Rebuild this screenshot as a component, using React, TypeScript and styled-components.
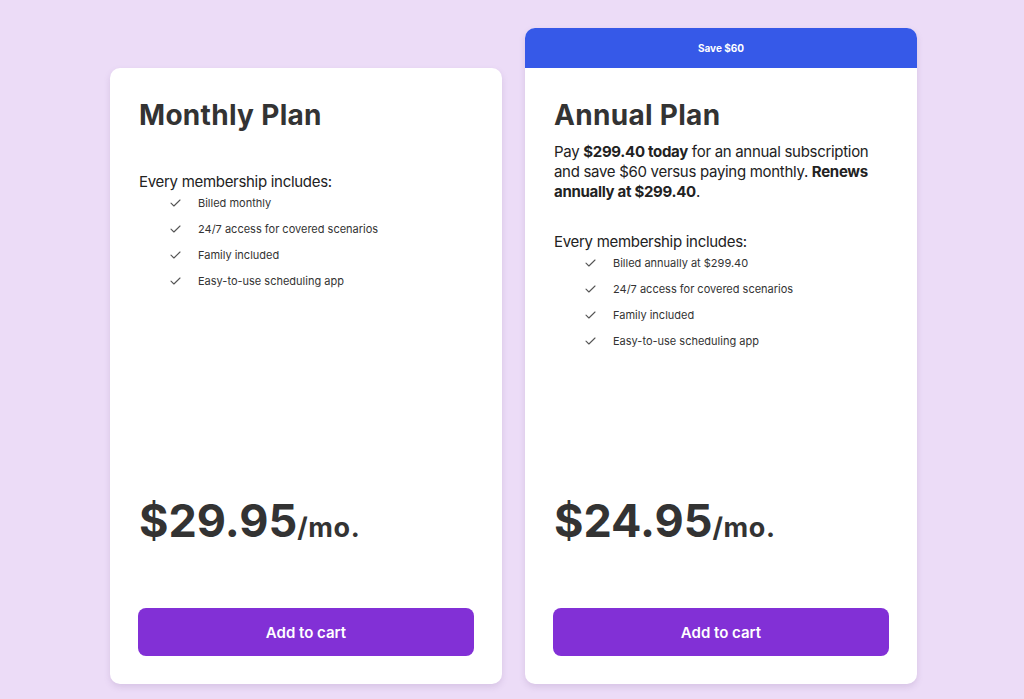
import styled, { createGlobalStyle } from "styled-components";

interface Plan {
  name: string;
  badge?: string;
  description?: React.ReactNode;
  features: string[];
  price: string;
}

const plans: Plan[] = [
  {
    name: "Monthly Plan",
    features: [
      "Billed monthly",
      "24/7 access for covered scenarios",
      "Family included",
      "Easy-to-use scheduling app",
    ],
    price: "$29.95",
  },
  {
    name: "Annual Plan",
    badge: "Save $60",
    description: (
      <>
        Pay <b>$299.40 today</b> for an annual subscription and save $60 versus
        paying monthly. <b>Renews annually at $299.40</b>.
      </>
    ),
    features: [
      "Billed annually at $299.40",
      "24/7 access for covered scenarios",
      "Family included",
      "Easy-to-use scheduling app",
    ],
    price: "$24.95",
  },
];

const Check = () => (
  <svg width="11" height="8" viewBox="0 0 11 8" fill="none">
    <path
      d="M1 4.2L3.9 7L10 1"
      stroke="#555"
      strokeWidth="1.1"
      strokeLinecap="round"
      strokeLinejoin="round"
    />
  </svg>
);

const PlanCard = ({ plan }: { plan: Plan }) => {
  return (
    <Card>
      {plan.badge && <Banner>{plan.badge}</Banner>}
      <Body>
        <Title>{plan.name}</Title>
        <Description>{plan.description}</Description>
        <Includes>Every membership includes:</Includes>
        <FeatureList>
          {plan.features.map((f) => (
            <Feature key={f}>
              <Check />
              <span>{f}</span>
            </Feature>
          ))}
        </FeatureList>
        <Spacer />
        <Price>
          {plan.price}
          <small>/mo.</small>
        </Price>
        <CartButton>Add to cart</CartButton>
      </Body>
    </Card>
  );
};

const App = () => {
  return (
    <>
      <GlobalStyle />
      <Page>
        {plans.map((p) => (
          <PlanCard key={p.name} plan={p} />
        ))}
      </Page>
    </>
  );
};

export default App;

const GlobalStyle = createGlobalStyle`
  html, body {
    margin: 0;
    padding: 0;
    background: #ecdcf7;
    font-family: "Inter", "Noto Sans", sans-serif;
  }
`;

const Page = styled.div`
  display: flex;
  justify-content: center;
  align-items: flex-end;
  gap: 23px;
  padding: 27px 0 15px 3px;
  min-height: 100vh;
  box-sizing: border-box;
`;

const Card = styled.div`
  width: 392px;
  background: #ffffff;
  border-radius: 10px;
  overflow: hidden;
  box-shadow: 0 3px 6px rgba(120, 90, 150, 0.18);
  display: flex;
  flex-direction: column;
`;

const Banner = styled.div`
  height: 40px;
  background: #3659e8;
  color: #ffffff;
  font-size: 10px;
  font-weight: 700;
  display: flex;
  align-items: center;
  justify-content: center;
`;

const Body = styled.div`
  height: 616px;
  box-sizing: border-box;
  padding: 30px 28px 28px;
  display: flex;
  flex-direction: column;
`;

const Title = styled.h2`
  margin: 0 0 10px 1px;
  font-size: 28px;
  line-height: 34px;
  font-weight: 700;
  letter-spacing: 0.3px;
  color: #333333;
`;

const Description = styled.p`
  margin: 0 0 30px 1px;
  font-size: 15px;
  line-height: 20px;
  letter-spacing: -0.3px;
  color: #222222;

  b {
    font-weight: 700;
  }
`;

const Includes = styled.p`
  margin: 0 0 0 1px;
  font-size: 15px;
  line-height: 20px;
  letter-spacing: -0.3px;
  color: #222222;
`;

const FeatureList = styled.ul`
  list-style: none;
  margin: 0;
  padding: 0 0 0 32px;
`;

const Feature = styled.li`
  display: flex;
  align-items: center;
  gap: 17px;
  height: 22px;
  margin-bottom: 4px;
  font-size: 11px;
  color: #333333;
`;

const Spacer = styled.div`
  flex: 1;
`;

const Price = styled.div`
  margin: 0 0 50px 1px;
  font-size: 45px;
  line-height: 60px;
  font-weight: 700;
  color: #333333;

  small {
    font-size: 27px;
    letter-spacing: 0.6px;
  }
`;

const CartButton = styled.button`
  height: 48px;
  border: none;
  border-radius: 8px;
  background: #8230d6;
  color: #ffffff;
  font-family: "Inter", "Noto Sans", sans-serif;
  font-size: 15px;
  font-weight: 600;
  cursor: pointer;
`;
